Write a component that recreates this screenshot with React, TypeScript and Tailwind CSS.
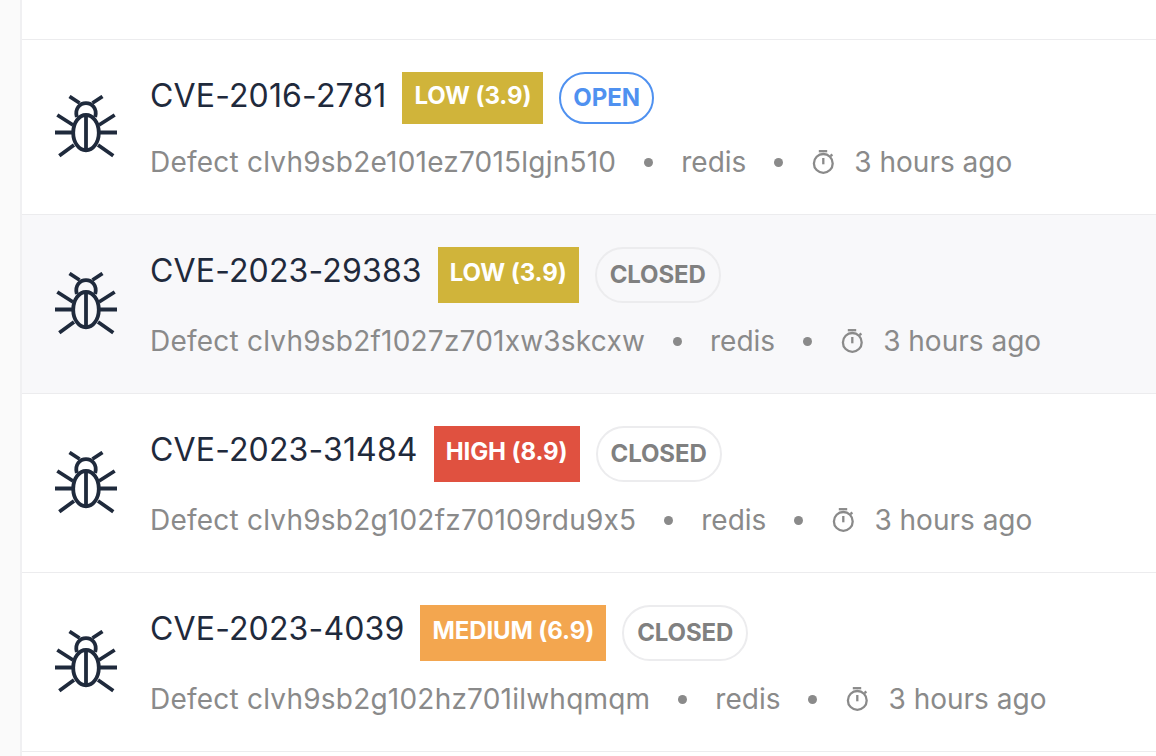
function BugIcon() {
  return (
    <svg viewBox="0 0 64 64" className="w-16 h-16 shrink-0 text-[#1f2a3c]" fill="none" stroke="currentColor" strokeWidth="3.8">
      <ellipse cx="32" cy="37.7" rx="12.8" ry="17.7" />
      <path d="M32 20v35" />
      <path d="M22.8 22C20.5 13.5 26 8.2 32 8.2S43.5 13.5 41.2 22" />
      <path d="M15.5 1.5 25.5 8M48.5 1.5 38.5 8" />
      <path d="M3.3 20 19 30M60.7 20 45 30" />
      <path d="M1 37.5h17M63 37.5H46" />
      <path d="M5.3 60.7 20 50M59.3 60.7 44 50" />
    </svg>
  );
}

function TimerIcon() {
  return (
    <svg viewBox="0 0 24 24" className="w-6 h-6 shrink-0 text-[#8a8a8a]" fill="none" stroke="currentColor" strokeWidth="2.3">
      <circle cx="12.3" cy="13.4" r="9.4" />
      <path d="M7.8 1.2h8.4" />
      <path d="M12.3 8v6.3" />
      <path d="M19.6 4.4l1.7 1.7" />
    </svg>
  );
}

const rows = [
  { cve: 'CVE-2016-2781', sev: 'LOW (3.9)', sevColor: 'bg-[#d0b43a]', status: 'OPEN', open: true, id: 'clvh9sb2e101ez7015lgjn510' },
  { cve: 'CVE-2023-29383', sev: 'LOW (3.9)', sevColor: 'bg-[#d0b43a]', status: 'CLOSED', open: false, id: 'clvh9sb2f1027z701xw3skcxw' },
  { cve: 'CVE-2023-31484', sev: 'HIGH (8.9)', sevColor: 'bg-[#e05140]', status: 'CLOSED', open: false, id: 'clvh9sb2g102fz70109rdu9x5' },
  { cve: 'CVE-2023-4039', sev: 'MEDIUM (6.9)', sevColor: 'bg-[#f3a64f]', status: 'CLOSED', open: false, id: 'clvh9sb2g102hz701ilwhqmqm' },
];

function Dot() {
  return <span className="w-[9px] h-[9px] rounded-full bg-[#8a8a8a] mx-7 shrink-0" />;
}

export default function App() {
  return (
    <div className="h-screen overflow-hidden bg-white flex font-['Inter',sans-serif]">
      <div className="w-[22px] shrink-0 bg-[#fafafa] border-r-2 border-[#f0f0f2]" />
      <div className="flex-1 min-w-0 pt-[39px]">
        <div className="border-t border-[#ececee]">
          {rows.map((row, i) => (
            <div
              key={row.cve}
              className={`flex items-center gap-8 pl-8 py-8 border-b border-[#ececee] ${i === 1 ? 'bg-[#f8f8fa]' : 'bg-white'}`}
            >
              <BugIcon />
              <div className="min-w-0">
                <div className="flex items-stretch gap-4">
                  <span className="text-[32px] leading-[48px] text-[#1f2a3c] tracking-[0.15px]">{row.cve}</span>
                  <span className={`flex items-center justify-center w-auto px-[12px] pb-1 text-[24px] font-bold tracking-[-0.1px] text-white ${row.sevColor} ${row.open ? 'h-[52px]' : 'h-14'}`}>
                    {row.sev}
                  </span>
                  <span
                    className={`flex items-center rounded-full border-2 text-[24px] font-bold tracking-[-0.1px] ${
                      row.open ? 'h-[52px] px-[12px] border-[#4f91f0] text-[#4f91f0]' : 'h-14 px-[13px] border-[#ececee] text-[#808080]'
                    }`}
                  >
                    {row.status}
                  </span>
                </div>
                <div className="mt-[18px] flex items-center text-[28px] leading-10 text-[#8a8a8a] whitespace-nowrap">
                  <span className="tracking-[0.22px]">Defect {row.id}</span>
                  <Dot />
                  <span>redis</span>
                  <Dot />
                  <TimerIcon />
                  <span className="ml-[19px]">3 hours ago</span>
                </div>
              </div>
            </div>
          ))}
        </div>
      </div>
    </div>
  );
}
